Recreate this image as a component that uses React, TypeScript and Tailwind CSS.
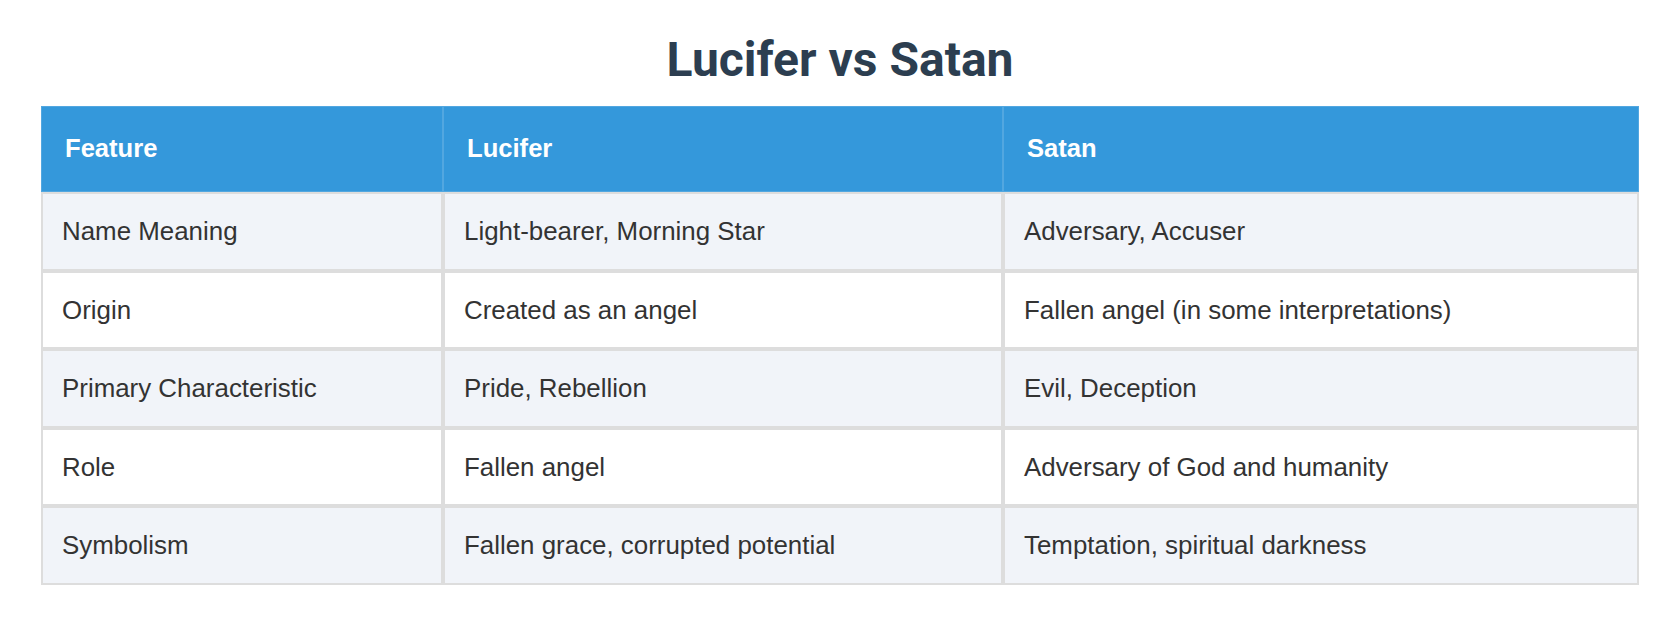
const ROWS = [
  { feature: "Name Meaning", lucifer: "Light-bearer, Morning Star", satan: "Adversary, Accuser" },
  { feature: "Origin", lucifer: "Created as an angel", satan: "Fallen angel (in some interpretations)" },
  { feature: "Primary Characteristic", lucifer: "Pride, Rebellion", satan: "Evil, Deception" },
  { feature: "Role", lucifer: "Fallen angel", satan: "Adversary of God and humanity" },
  { feature: "Symbolism", lucifer: "Fallen grace, corrupted potential", satan: "Temptation, spiritual darkness" },
];

const TH =
  "border border-[#52a7e0] px-[23px] pt-[26px] pb-[28px] text-left text-[25.6px] font-bold leading-[30px] text-white";
const TD =
  "border-2 border-[#dddddd] px-[19px] py-[22px] text-[25.9px] leading-[30.5px] text-[#333333]";

export default function App() {
  return (
    <div className="min-h-[626px] bg-white pt-[32px] font-['Liberation_Sans',Arial,sans-serif]">
      <h1 className="mb-[18px] text-center font-['Roboto',sans-serif] text-[48px] font-bold leading-[56px] text-[#2c3e50]">
        Lucifer vs Satan
      </h1>
      <table className="mx-auto w-[1598px] table-fixed border-separate border-spacing-0">
        <colgroup>
          <col className="w-[402px]" />
          <col className="w-[560px]" />
          <col />
        </colgroup>
        <thead>
          <tr className="bg-[#3498db]">
            <th className={TH}>Feature</th>
            <th className={TH}>Lucifer</th>
            <th className={TH}>Satan</th>
          </tr>
        </thead>
        <tbody>
          {ROWS.map((row, i) => (
            <tr key={row.feature} className={i % 2 === 0 ? "bg-[#f1f4f9]" : "bg-white"}>
              <td className={TD}>{row.feature}</td>
              <td className={TD}>{row.lucifer}</td>
              <td className={TD}>{row.satan}</td>
            </tr>
          ))}
        </tbody>
      </table>
    </div>
  );
}
